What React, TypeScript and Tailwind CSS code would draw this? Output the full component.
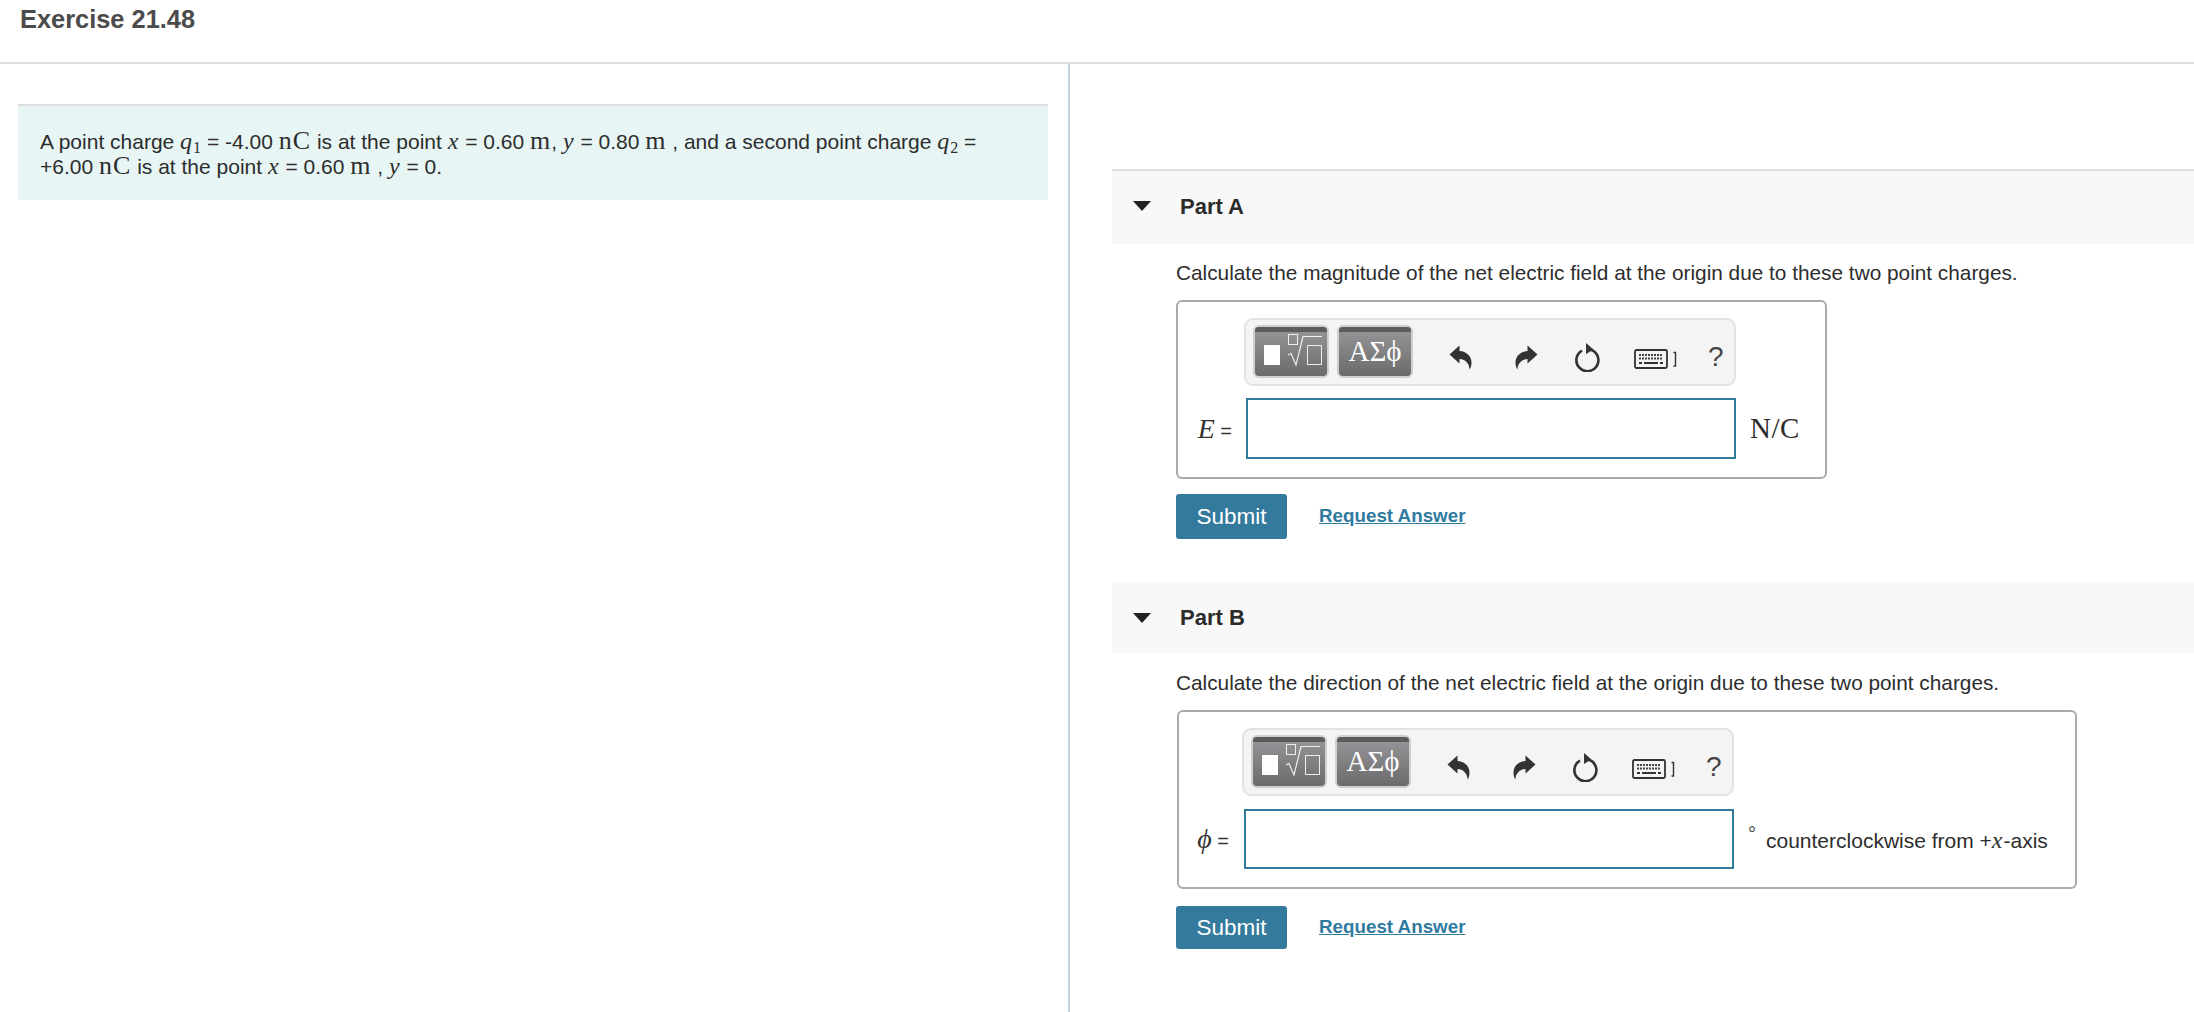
const SANS = "font-['Liberation_Sans',Arial,sans-serif]";

function MI({ children }: { children: React.ReactNode }) {
  return <span className="font-['Liberation_Serif',serif] italic text-[24px] leading-none tracking-[1px]">{children}</span>;
}

function MR({ children }: { children: React.ReactNode }) {
  return <span className="font-['Liberation_Serif',serif] text-[26px] leading-none tracking-[1px]">{children}</span>;
}

function Sub({ children }: { children: React.ReactNode }) {
  return <span className="font-['Liberation_Serif',serif] text-[16px] leading-none relative top-[4px]">{children}</span>;
}

function Triangle() {
  return (
    <svg width="18" height="10" viewBox="0 0 18 10" aria-hidden="true">
      <path d="M0 0H18L9 10Z" fill="#222" />
    </svg>
  );
}

function UndoIcon({ flip }: { flip?: boolean }) {
  return (
    <svg width="23" height="25" viewBox="0 0 23 25" className={flip ? "-scale-x-100" : ""} aria-hidden="true">
      <path d="M0.5 9.5L10.5 0.5V6C17.5 6.5 22.5 11 22.5 17.5C22.5 20 22 22.5 20.5 24.5C20.5 19 17 14.5 10.5 14V18.5Z" fill="#333" />
    </svg>
  );
}

function ResetIcon() {
  return (
    <svg width="27" height="29" viewBox="0 0 27 29" aria-hidden="true">
      <path d="M8 7.6A11 11 0 1 0 17 6.8" fill="none" stroke="#333" strokeWidth="2.6" />
      <path d="M12 0L19.5 6.5L12 11Z" fill="#333" />
    </svg>
  );
}

function KeyboardIcon() {
  return (
    <svg width="44" height="20" viewBox="0 0 44 20" aria-hidden="true">
      <rect x="1" y="1" width="32" height="18" rx="1.5" fill="#f4f4f4" stroke="#333" strokeWidth="1.8" />
      <path d="M5 6H29M5 9.5H29" stroke="#444" strokeWidth="2" strokeDasharray="2 1" />
      <path d="M5 14H8M10 14H24M26 14H29" stroke="#333" strokeWidth="2" />
      <path d="M39.5 3.5H41.5V17H39.5" fill="none" stroke="#333" strokeWidth="1.4" />
    </svg>
  );
}

function RadicalIcon() {
  return (
    <svg width="72" height="44" viewBox="0 0 72 44" className="block" aria-hidden="true">
      <rect x="9" y="13" width="16" height="20" fill="#fff" />
      <rect x="33.5" y="2.5" width="9" height="10" fill="none" stroke="#eee" />
      <path d="M33 23L36 21.5L41 33L48 4.5H67" fill="none" stroke="#eee" strokeWidth="1.2" />
      <rect x="52.5" y="13.5" width="14" height="19" fill="none" stroke="#eee" />
    </svg>
  );
}

function PaletteButton({ children }: { children: React.ReactNode }) {
  return (
    <div className="h-[53px] w-[76px] rounded-[6px] border-2 border-[#cfcfcf] overflow-hidden bg-gradient-to-b from-[#98989c] to-[#6b6b6b]">
      <div className="h-[5px] bg-[#5c5c5c]" />
      {children}
    </div>
  );
}

function Toolbar() {
  return (
    <div className="h-[68px] w-[492px] rounded-[9px] border-2 border-[#e2e2e2] bg-[#f4f4f4] flex pl-[7px] pt-[5px]">
      <PaletteButton>
        <RadicalIcon />
      </PaletteButton>
      <div className="ml-[8px]">
        <PaletteButton>
          <div className="text-center text-white font-['Liberation_Serif',serif] text-[29px] leading-[38px]">ΑΣϕ</div>
        </PaletteButton>
      </div>
      <div className="flex items-center h-[58px] pt-[6px] ml-[36px]">
        <UndoIcon />
        <div className="ml-[43px]"><UndoIcon flip /></div>
        <div className="ml-[36px]"><ResetIcon /></div>
        <div className="ml-[33px] pt-[4px]"><KeyboardIcon /></div>
        <div className={`ml-[30px] text-[28px] leading-none text-[#444] ${SANS}`}>?</div>
      </div>
    </div>
  );
}

function SubmitRow({ height }: { height: string }) {
  return (
    <div className="flex items-center">
      <button className={`${height} w-[111px] rounded-[3px] bg-[#337a9c] text-white text-[22.5px] ${SANS}`}>Submit</button>
      <a href="#" className={`ml-[32px] text-[#2f7a9f] text-[18.8px] font-bold underline ${SANS}`}>Request Answer</a>
    </div>
  );
}

export default function App() {
  return (
    <div className={`h-[1012px] w-[2194px] overflow-hidden bg-white text-[#333] ${SANS}`}>
      <header className="h-[64px] border-b-2 border-[#e0e0e0] pl-[20px] pt-[3px]">
        <h1 className="text-[25.4px] leading-[32px] font-bold text-[#4b4b4b]">Exercise 21.48</h1>
      </header>
      <div className="flex h-[948px]">
        {/* Problem statement */}
        <div className="w-[1070px] shrink-0 border-r-2 border-[#c6d4e1] pl-[18px] pt-[40px]">
          <div className="w-[1030px] h-[96px] border-t-2 border-[#dedede] bg-[#e7f5f5] pl-[22px] pt-[22px] text-[21px] leading-[25px] text-[#2d2d2d]">
            <div className="whitespace-nowrap h-[25px]">
              A point charge <MI>q</MI><Sub>1</Sub> = -4.00 <MR>nC</MR> is at the point <MI>x</MI> = 0.60 <MR>m</MR>, <MI>y</MI> = 0.80 <MR>m</MR> , and a second point charge <MI>q</MI><Sub>2</Sub> =
            </div>
            <div className="whitespace-nowrap h-[25px]">
              +6.00 <MR>nC</MR> is at the point <MI>x</MI> = 0.60 <MR>m</MR> , <MI>y</MI> = 0.
            </div>
          </div>
        </div>

        {/* Parts */}
        <div className="flex-1 pl-[42px] pt-[105px]">
          <div className="h-[75px] border-t-2 border-[#e0e0e0] bg-[#f8f8f8] flex items-center pl-[21px] pb-[3px]">
            <Triangle />
            <span className="ml-[29px] text-[22px] font-bold text-[#2b2b2b]">Part A</span>
          </div>
          <div className="pl-[64px]">
            <p className="mt-[16px] h-[26px] text-[20.8px] leading-[26px] text-[#2d2d2d] whitespace-nowrap">
              Calculate the magnitude of the net electric field at the origin due to these two point charges.
            </p>
            <div className="mt-[14px] h-[179px] w-[651px] rounded-[6px] border-2 border-[#aaaaaa] pt-[16px] pl-[66px]">
              <Toolbar />
              <div className="mt-[12px] flex items-center -ml-[66px]">
                <div className="w-[68px] shrink-0 text-right pr-[14px] text-[20px] whitespace-nowrap">
                  <span className="font-['Liberation_Serif',serif] italic text-[28px]">E</span> =
                </div>
                <div className="h-[61px] w-[490px] border-2 border-[#337a9c] bg-white" />
                <span className="ml-[14px] font-['Liberation_Serif',serif] text-[29px] tracking-[0.5px] text-[#2d2d2d]">N/C</span>
              </div>
            </div>
            <div className="mt-[15px]"><SubmitRow height="h-[45px]" /></div>
          </div>

          <div className="mt-[43px] h-[71px] bg-[#f8f8f8] flex items-center pl-[21px]">
            <Triangle />
            <span className="ml-[29px] text-[22px] font-bold text-[#2b2b2b]">Part B</span>
          </div>
          <div className="pl-[64px]">
            <p className="mt-[17px] h-[26px] text-[20.8px] leading-[26px] text-[#2d2d2d] whitespace-nowrap">
              Calculate the direction of the net electric field at the origin due to these two point charges.
            </p>
            <div className="mt-[14px] ml-px h-[179px] w-[900px] rounded-[6px] border-2 border-[#aaaaaa] pt-[16px] pl-[63px]">
              <Toolbar />
              <div className="mt-[13px] flex items-center -ml-[63px]">
                <div className="w-[65px] shrink-0 text-right pr-[15px] text-[20px] whitespace-nowrap">
                  <span className="font-['Liberation_Serif',serif] italic text-[28px]">ϕ</span> =
                </div>
                <div className="h-[60px] w-[490px] border-2 border-[#337a9c] bg-white" />
                <span className="ml-[14px] text-[20px] text-[#444] relative -top-[5px]">°</span>
                <span className="ml-[10px] text-[21px] text-[#2d2d2d] whitespace-nowrap relative top-[2px]">
                  counterclockwise from +<MI>x</MI>-axis
                </span>
              </div>
            </div>
            <div className="mt-[17px]"><SubmitRow height="h-[43px]" /></div>
          </div>
        </div>
      </div>
    </div>
  );
}
